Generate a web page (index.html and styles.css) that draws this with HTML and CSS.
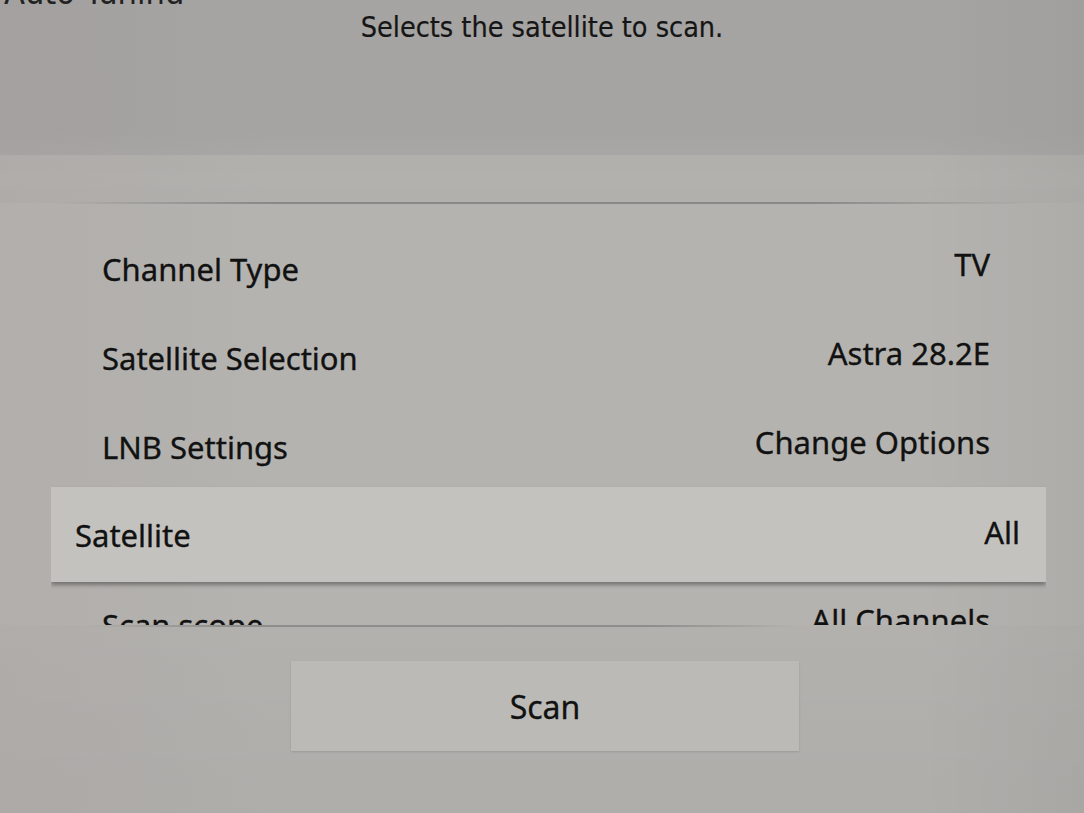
FILE: index.html
```html
<!DOCTYPE html>
<html>
<head>
<meta charset="utf-8">
<link rel="stylesheet" href="styles.css">
</head>
<body>
<div class="screen">
  <div class="top">
    <div class="title-clip"><div class="title">Auto Tuning</div></div>
    <div class="desc">Selects the satellite to scan.</div>
  </div>
  <div class="band"></div>
  <div class="list">
    <div class="row"><span class="label">Channel Type</span><span class="value">TV</span></div>
    <div class="row"><span class="label">Satellite Selection</span><span class="value">Astra 28.2E</span></div>
    <div class="row"><span class="label">LNB Settings</span><span class="value">Change Options</span></div>
    <div class="row selected"><span class="label">Satellite</span><span class="value">All</span></div>
    <div class="row"><span class="label">Scan scope</span><span class="value">All Channels</span></div>
  </div>
  <div class="bottom">
    <div class="scan">Scan</div>
  </div>
</div>
</body>
</html>
```
FILE: styles.css
```css
html, body {
  margin: 0;
  padding: 0;
}
body {
  width: 1084px;
  height: 813px;
  overflow: hidden;
  background: #b4b3b0;
  font-family: "Noto Sans", "Open Sans", sans-serif;
  color: #111;
}
.screen {
  display: flex;
  flex-direction: column;
  height: 813px;
  background: linear-gradient(90deg, rgba(150,120,120,0.08) 0%, rgba(0,0,0,0) 25%, rgba(0,0,0,0) 85%, rgba(0,0,0,0.04) 100%);
}
.top {
  height: 155px;
  background: linear-gradient(180deg, rgba(118,118,122,0.24) 0%, rgba(118,118,120,0.24) 85%, rgba(118,118,120,0.2) 100%);
  display: flex;
  flex-direction: column;
  align-items: center;
}
.title-clip {
  align-self: stretch;
  height: 4px;
  overflow: hidden;
  padding-left: 4px;
}
.title {
  font-family: "DejaVu Sans Condensed", "Liberation Sans Narrow", sans-serif;
  font-size: 34px;
  line-height: 34px;
  margin-top: -25px;
  color: #222;
}
.desc {
  font-family: "DejaVu Sans Condensed", "Liberation Sans Narrow", sans-serif;
  font-size: 28.5px;
  line-height: 32px;
  margin-top: 8px;
  color: #151515;
  -webkit-text-stroke: 0.2px #151515;
}
.band {
  height: 48px;
  background: linear-gradient(180deg, rgba(0,0,0,0.02) 0%, rgba(0,0,0,0.01) 50%, rgba(0,0,0,0.02) 100%);
}
.band::after {
  content: "";
  display: block;
  height: 2px;
  margin-top: 47px;
  background: linear-gradient(90deg, rgba(0,0,0,0) 5%, rgba(60,60,60,0.35) 25%, rgba(60,60,60,0.35) 75%, rgba(0,0,0,0) 95%);
  filter: blur(0.6px);
}
.list {
  height: 422px;
  overflow: hidden;
  margin: 0 38px 0 51px;
  padding-top: 21px;
  box-sizing: border-box;
  display: flex;
  flex-direction: column;
}
.row {
  flex: 0 0 89px;
  display: flex;
  align-items: center;
  justify-content: space-between;
  padding: 0 56px 0 51px;
  font-size: 31px;
  line-height: 38px;
  -webkit-text-stroke: 0.35px #111;
}
.row .value {
  margin-bottom: 10px;
}
.row.selected {
  flex: 0 0 95px;
  margin: -4px 0 -2px;
  padding: 0 26px 0 24px;
  background: #c3c2be;
  box-shadow: 0 3px 4px rgba(0,0,0,0.35);
  position: relative;
  z-index: 1;
}
.row.selected .value {
  margin-bottom: 6px;
}
.bottom {
  flex: 1;
  background: linear-gradient(180deg, rgba(0,0,0,0.01) 0%, rgba(0,0,0,0.03) 100%);
  padding-left: 291px;
}
.bottom::before {
  content: "";
  display: block;
  height: 2px;
  margin-left: -200px;
  width: 700px;
  background: linear-gradient(90deg, rgba(0,0,0,0) 0%, rgba(60,60,60,0.3) 20%, rgba(60,60,60,0.3) 80%, rgba(0,0,0,0) 100%);
  filter: blur(0.6px);
  margin-bottom: 34px;
}
.scan {
  width: 508px;
  height: 90px;
  background: #bbbab7;
  box-shadow: 0 1px 2px rgba(0,0,0,0.12);
  display: flex;
  align-items: center;
  justify-content: center;
  font-size: 32px;
  -webkit-text-stroke: 0.3px #111;
}
```
